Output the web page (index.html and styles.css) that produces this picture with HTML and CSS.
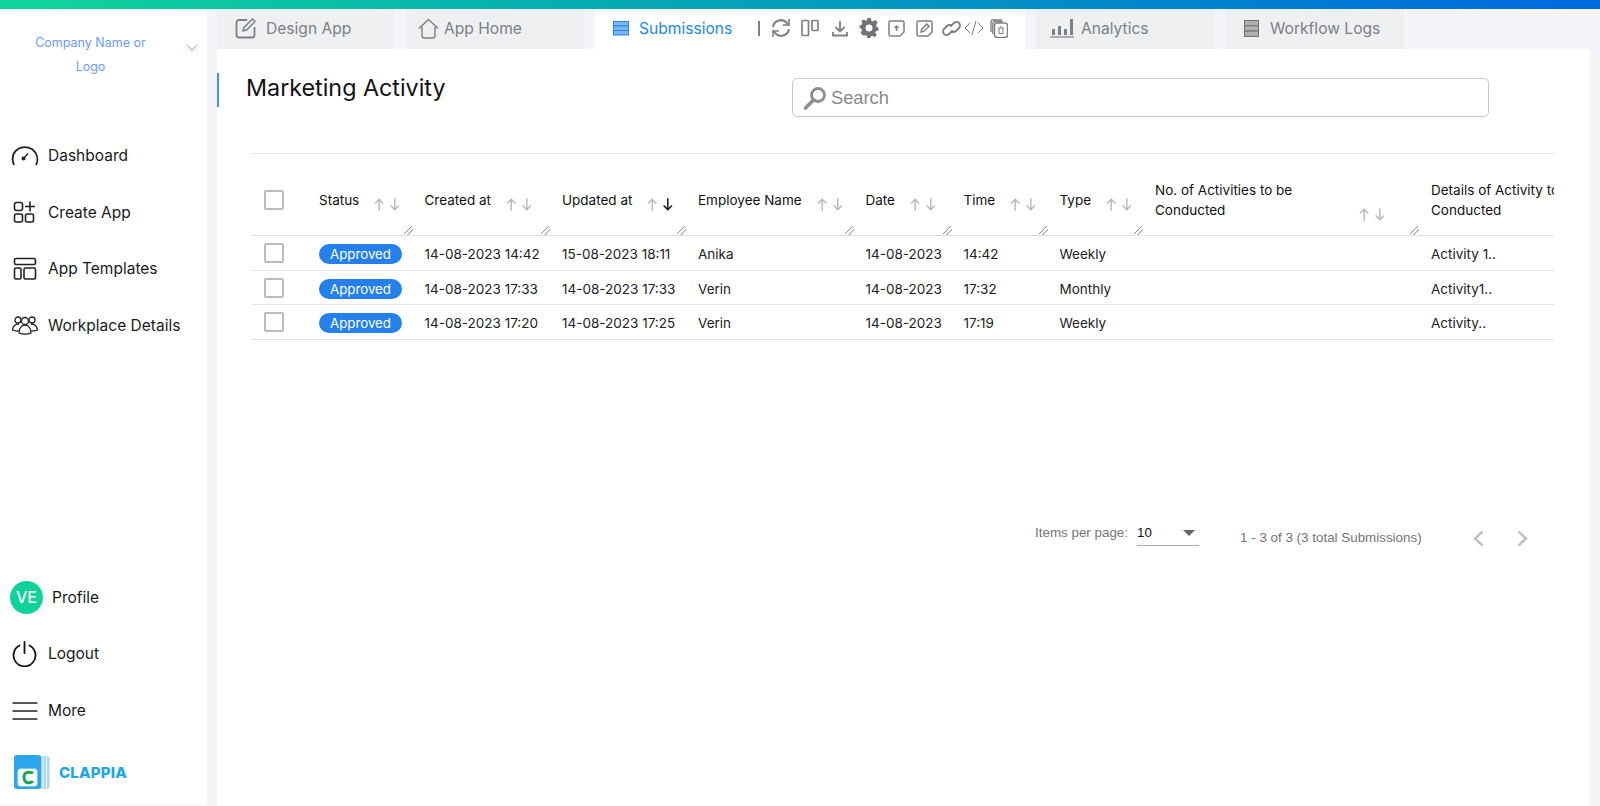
FILE: index.html
```html
<!DOCTYPE html>
<html lang="en">
<head>
<meta charset="utf-8">
<title>Marketing Activity</title>
<link rel="stylesheet" href="styles.css">
</head>
<body>
<div class="topbar"></div>
<div class="shell">
  <aside class="sidebar">
    <div class="company">
      <div class="company-name">Company Name or Logo</div>
      <svg class="chev" width="12" height="7" viewBox="0 0 12 7"><path d="M1 1l5 5 5-5" fill="none" stroke="#7fa6ee" stroke-width="1"/></svg>
    </div>
    <nav class="nav">
      <a class="nav-item"><svg class="nav-icon" width="30" height="24" viewBox="0 0 30 24"><path d="M4 22C1 15 3 9 8 6c5-3 10-2 14 0 5 4 7 10 4 16" fill="none" stroke="#222" stroke-width="1.8"/><path d="M13.500 15.500l4.500-5" stroke="#222" stroke-width="1.400"/><circle cx="13.500" cy="15.500" r="2" fill="#222"/></svg><span>Dashboard</span></a>
      <a class="nav-item"><svg class="nav-icon" width="30" height="24" viewBox="0 0 30 24"><g fill="none" stroke="#222" stroke-width="1.600"><rect x="4.500" y="2.500" width="8" height="8" rx="2"/><rect x="4.500" y="14" width="8" height="8" rx="2"/><rect x="15.500" y="14" width="8" height="8" rx="2"/><path d="M20 1.500v10M15 6.500h10"/></g></svg><span>Create App</span></a>
      <a class="nav-item"><svg class="nav-icon" width="30" height="24" viewBox="0 0 30 24"><g fill="none" stroke="#222" stroke-width="1.600"><rect x="4.500" y="1.500" width="21" height="6" rx="1.500"/><rect x="4.500" y="11" width="6.500" height="11" rx="1.500"/><rect x="14" y="11" width="11.500" height="11" rx="1.500"/></g></svg><span>App Templates</span></a>
      <a class="nav-item"><svg class="nav-icon" width="30" height="24" viewBox="0 0 30 24"><g fill="none" stroke="#222" stroke-width="1.300"><circle cx="15" cy="8" r="3.500"/><circle cx="8" cy="7" r="3"/><circle cx="22" cy="7" r="3"/><path d="M9 20c0-4 2-8 6-8s6 4 6 8c-3 1.500-9 1.500-12 0z"/><path d="M9 11c-3 0-6 2-6.500 6 1.500 1 4 1 6 1M21 11c3 0 6 2 6.500 6-1.500 1-4 1-6 1"/></g></svg><span>Workplace Details</span></a>
    </nav>
    <div class="side-bottom">
      <a class="nav-item profile"><span class="avatar">VE</span><span>Profile</span></a>
      <a class="nav-item"><svg class="nav-icon" width="30" height="26" viewBox="0 0 30 26"><path d="M19.500 4.500a11 11 0 1 1-10 0" fill="none" stroke="#111" stroke-width="1.800" stroke-linecap="round"/><path d="M14.500 1v11" stroke="#111" stroke-width="1.800" stroke-linecap="round"/></svg><span>Logout</span></a>
      <a class="nav-item"><svg class="nav-icon" width="30" height="20" viewBox="0 0 30 20"><path d="M2.500 2h25M2.500 10h25M2.500 18h25" stroke="#222" stroke-width="1.700"/></svg><span>More</span></a>
      <div class="brand">
        <svg width="36" height="35" viewBox="0 0 36 35"><rect x="24" y="1" width="11.500" height="33" rx="3" fill="#a9d6f6"/><path d="M29 1v33M32.500 1v33" stroke="#fff" stroke-width=".9"/><rect x="0" y="0" width="27" height="34" rx="3" fill="#2ba6ec"/><rect x="4" y="14" width="19" height="17" rx="2" fill="#fff" stroke="#cfeadb" stroke-width="1"/><path d="M19 18.500c-1-1.500-6-2-8 0-2 3-1 8 2 9 2 .5 5 0 6-1.500" fill="none" stroke="#16a951" stroke-width="3"/></svg>
        <span class="brand-name">CLAPPIA</span>
      </div>
    </div>
  </aside>

  <main class="workspace">
    <div class="tabs">
      <div class="tab tab-design"><svg width="22" height="22" viewBox="0 0 22 22"><path d="M12 3H4a2.500 2.500 0 0 0-2.500 2.500v12.500A2.500 2.500 0 0 0 4 20.500h13a2.500 2.500 0 0 0 2.500-2.500V10" fill="none" stroke="#7c7f83" stroke-width="1.800"/><path d="M8 14l1-3.500 8.500-8.500 2.500 2.500-8.500 8.500z" fill="none" stroke="#7c7f83" stroke-width="1.500"/></svg><span>Design App</span></div>
      <div class="tab tab-home"><svg width="21" height="21" viewBox="0 0 21 21"><path d="M1 10.500L10.500 1.500 20 10.500M4 9v8.500a2.500 2.500 0 0 0 2.500 2.500h8a2.500 2.500 0 0 0 2.500-2.500V9" fill="none" stroke="#7c7f83" stroke-width="1.400"/></svg><span>App Home</span></div>
      <div class="tab tab-active">
        <svg class="sub-icon" width="16" height="15" viewBox="0 0 16 15"><g fill="#7db6f2" stroke="#1e88e5" stroke-width="1"><rect x=".5" y=".5" width="15" height="4.500"/><rect x=".5" y="5" width="15" height="4.500"/><rect x=".5" y="9.500" width="15" height="4.500"/></g></svg>
        <span class="sub-label">Submissions</span>
        <span class="divider"></span>
        <div class="tools">
          <svg width="20" height="20" viewBox="0 0 20 20"><g fill="none" stroke="#7c7f83" stroke-width="2"><path d="M2 9a8 8 0 0 1 14-4l2 2"/><path d="M18 1v6h-6" stroke-width="1.600"/><path d="M18 11a8 8 0 0 1-14 4l-2-2"/><path d="M2 19v-6h6" stroke-width="1.600"/></g></svg>
          <svg width="18" height="18" viewBox="0 0 18 18"><g fill="none" stroke="#7c7f83" stroke-width="1.700"><rect x="1" y="1.500" width="6.500" height="15" rx="1"/><rect x="11" y="1.500" width="6" height="10" rx="1"/></g></svg>
          <svg width="16" height="17" viewBox="0 0 16 17"><g fill="none" stroke="#7c7f83" stroke-width="1.800"><path d="M8 1v10M3.500 7L8 11.500 12.500 7"/><path d="M1 12v3.500h14V12"/></g></svg>
          <svg width="20" height="20" viewBox="0 0 20 20"><path d="M8 0h4l.5 3 2 .8L17 2l3 3-1.800 2.500.8 2.500 2 .5v3l-3 .5-.8 2 1.800 2.500-2.500 2.500-2.500-1.800-2 .8-.5 2H8l-.5-2.500-2-.8L3 19l-3-3 1.800-2.500-.8-2L-1 11V8l2.200-.5.8-2L1 3l3-1.500 2 1.500 1.500-.5z" transform="translate(1.500 0) scale(.86 .92)" fill="#6f7377"/><circle cx="10" cy="10" r="3.500" fill="#fff"/></svg>
          <svg width="17" height="17" viewBox="0 0 17 17"><g fill="none" stroke="#7c7f83" stroke-width="1.500"><path d="M12 16H2.500A1.500 1.500 0 0 1 1 14.500v-12A1.500 1.500 0 0 1 2.500 1h12A1.500 1.500 0 0 1 16 2.500V12l-4 4"/><path d="M8.500 11V6M6.500 8l2-2 2 2"/></g></svg>
          <svg width="17" height="17" viewBox="0 0 17 17"><g fill="none" stroke="#7c7f83" stroke-width="1.500"><path d="M12 16H2.500A1.500 1.500 0 0 1 1 14.500v-12A1.500 1.500 0 0 1 2.500 1h12A1.500 1.500 0 0 1 16 2.500V12l-4 4"/><path d="M5 12l.8-3 5-5 2.200 2.200-5 5z"/></g></svg>
          <svg width="19" height="17" viewBox="0 0 19 17"><g fill="none" stroke="#7c7f83" stroke-width="1.800"><path d="M8 6.500L12 3a3.500 3.500 0 0 1 5 5l-3 3a3.500 3.500 0 0 1-5 0"/><path d="M11 10.500L7 14a3.500 3.500 0 0 1-5-5l3-3a3.500 3.500 0 0 1 5 0"/></g></svg>
          <svg width="20" height="16" viewBox="0 0 20 16"><g fill="none" stroke="#7c7f83" stroke-width="1"><path d="M6 3L1 8l5 5M14 3l5 5-5 5M12 1L8 15"/></g></svg>
          <svg width="18" height="19" viewBox="0 0 18 19"><g fill="none" stroke="#7c7f83" stroke-width="1.300"><path d="M1 13V3a2 2 0 0 1 2-2h9"/><path d="M2.800 15V4.500a2 2 0 0 1 2-2h8"/></g><rect x="4.500" y="4" width="13" height="14.500" rx="2.500" fill="#fff" stroke="#7c7f83" stroke-width="1.400"/><path d="M8 9h6M9 9v5.500h4V9M10 8h2" fill="none" stroke="#7c7f83" stroke-width="1"/></svg>
        </div>
      </div>
      <div class="tab tab-analytics"><svg width="24" height="20" viewBox="0 0 24 20"><path d="M2 11h3v6H2zM8 8h3v9H8zM14 11h3v6h-3zM20 1h3v16h-3z" fill="#7c7f83"/><path d="M0 19h24" stroke="#7c7f83" stroke-width="1.200"/></svg><span>Analytics</span></div>
      <div class="tab tab-logs"><svg width="15" height="17" viewBox="0 0 15 17"><g fill="#b0b0b0" stroke="#6f6f6f" stroke-width="1"><rect x=".5" y=".5" width="14" height="5.300"/><rect x=".5" y="5.800" width="14" height="5.300"/><rect x=".5" y="11.100" width="14" height="5.300"/></g></svg><span>Workflow Logs</span></div>
    </div>

    <section class="panel">
      <header class="panel-head">
        <h1 class="title">Marketing Activity</h1>
        <label class="search">
          <svg width="24" height="24" viewBox="0 0 24 24"><circle cx="15" cy="9" r="6.500" fill="none" stroke="#8d8d8d" stroke-width="2.800"/><path d="M10.500 14L2.500 22" stroke="#8d8d8d" stroke-width="3.600" stroke-linecap="round"/></svg>
          <span class="search-text">Search</span>
        </label>
      </header>

      <div class="table-wrap">
        <table class="grid">
          <colgroup>
            <col class="c-check"><col class="c-status"><col class="c-created"><col class="c-updated"><col class="c-name"><col class="c-date"><col class="c-time"><col class="c-type"><col class="c-count"><col class="c-details">
          </colgroup>
          <thead>
            <tr>
              <th class="check-cell"><span class="box"></span></th>
              <th><div class="th-in"><span>Status</span><svg class="sort" viewBox="0 0 25 14"><path class="up" d="M5 13V2M1 6l4-4 4 4"/><path class="up" d="M20 1v11M16 8l4 4 4-4"/></svg></div><i class="grip"></i></th>
              <th><div class="th-in"><span>Created at</span><svg class="sort" viewBox="0 0 25 14"><path class="up" d="M5 13V2M1 6l4-4 4 4"/><path class="up" d="M20 1v11M16 8l4 4 4-4"/></svg></div><i class="grip"></i></th>
              <th><div class="th-in"><span>Updated at</span><svg class="sort" viewBox="0 0 25 14"><path class="up" d="M5 13V2M1 6l4-4 4 4"/><path class="down" d="M20 1v11M16 8l4 4 4-4"/></svg></div><i class="grip"></i></th>
              <th><div class="th-in"><span>Employee Name</span><svg class="sort" viewBox="0 0 25 14"><path class="up" d="M5 13V2M1 6l4-4 4 4"/><path class="up" d="M20 1v11M16 8l4 4 4-4"/></svg></div><i class="grip"></i></th>
              <th><div class="th-in"><span>Date</span><svg class="sort" viewBox="0 0 25 14"><path class="up" d="M5 13V2M1 6l4-4 4 4"/><path class="up" d="M20 1v11M16 8l4 4 4-4"/></svg></div><i class="grip"></i></th>
              <th><div class="th-in"><span>Time</span><svg class="sort" viewBox="0 0 25 14"><path class="up" d="M5 13V2M1 6l4-4 4 4"/><path class="up" d="M20 1v11M16 8l4 4 4-4"/></svg></div><i class="grip"></i></th>
              <th><div class="th-in"><span>Type</span><svg class="sort" viewBox="0 0 25 14"><path class="up" d="M5 13V2M1 6l4-4 4 4"/><path class="up" d="M20 1v11M16 8l4 4 4-4"/></svg></div><i class="grip"></i></th>
              <th><div class="th-in"><span class="wide-label">No. of Activities to be Conducted</span><svg class="sort" viewBox="0 0 25 14"><path class="up" d="M5 13V2M1 6l4-4 4 4"/><path class="up" d="M20 1v11M16 8l4 4 4-4"/></svg></div><i class="grip"></i></th>
              <th><div class="th-in"><span class="wide-label">Details of Activity to be Conducted</span></div></th>
            </tr>
          </thead>
          <tbody>
            <tr><td class="check-cell"><span class="box"></span></td><td><span class="badge">Approved</span></td><td>14-08-2023 14:42</td><td>15-08-2023 18:11</td><td>Anika</td><td>14-08-2023</td><td>14:42</td><td>Weekly</td><td></td><td>Activity 1..</td></tr>
            <tr><td class="check-cell"><span class="box"></span></td><td><span class="badge">Approved</span></td><td>14-08-2023 17:33</td><td>14-08-2023 17:33</td><td>Verin</td><td>14-08-2023</td><td>17:32</td><td>Monthly</td><td></td><td>Activity1..</td></tr>
            <tr><td class="check-cell"><span class="box"></span></td><td><span class="badge">Approved</span></td><td>14-08-2023 17:20</td><td>14-08-2023 17:25</td><td>Verin</td><td>14-08-2023</td><td>17:19</td><td>Weekly</td><td></td><td>Activity..</td></tr>
          </tbody>
        </table>
      </div>

      <footer class="pager">
        <span class="per-label">Items per page:</span>
        <span class="per-select"><span>10</span><i class="caret"></i></span>
        <span class="range">1 - 3 of 3 (3 total Submissions)</span>
        <svg class="pg-prev" width="13" height="17" viewBox="0 0 13 17"><path d="M10.500 1.500L3 8.500l7.500 7" fill="none" stroke="#c0c0c0" stroke-width="2.400"/></svg>
        <svg class="pg-next" width="13" height="17" viewBox="0 0 13 17"><path d="M2.500 1.500L10 8.500l-7.500 7" fill="none" stroke="#c0c0c0" stroke-width="2.400"/></svg>
      </footer>
    </section>
  </main>
</div>
</body>
</html>
```

FILE: styles.css
```css
* { box-sizing: border-box; }
html, body { margin: 0; height: 100%; }
body {
  height: 806px;
  overflow: hidden;
  display: flex;
  flex-direction: column;
  background: #f3f5f9;
  font-family: Inter, "Liberation Sans", sans-serif;
  color: #111;
}
.topbar {
  height: 9px;
  flex: none;
  background: linear-gradient(90deg, #10d69a 0%, #05a8b4 40%, #0068e0 100%);
}
.shell { flex: 1; display: flex; min-height: 0; }

/* sidebar */
.sidebar {
  width: 207px;
  flex: none;
  background: #fff;
  display: flex;
  flex-direction: column;
  margin-bottom: 1px;
}
.company {
  display: flex;
  align-items: center;
  height: 70px;
  margin-top: 11px;
  padding-left: 32px;
}
.company-name {
  width: 117px;
  text-align: center;
  font-size: 12.500px;
  line-height: 24px;
  color: #6d9cf4;
}
.chev { margin-left: 37px; margin-top: -15px; }
.nav { display: flex; flex-direction: column; margin-top: 37px; }
.nav-item {
  height: 56.700px;
  display: flex;
  align-items: center;
  gap: 8px;
  padding-left: 10px;
  font-size: 15.500px;
  color: #1a1a1a;
}
.nav-icon { flex: none; }
.side-bottom { margin-top: auto; display: flex; flex-direction: column; padding-bottom: 15px; }
.profile { gap: 9px; }
.avatar {
  width: 33px;
  height: 33px;
  border-radius: 50%;
  background: #0ed39a;
  color: #fff;
  font-size: 16px;
  font-weight: 500;
  display: flex;
  align-items: center;
  justify-content: center;
}
.brand { display: flex; align-items: center; gap: 9px; padding-left: 14px; margin-top: 16px; }
.brand-name { font-weight: 800; font-size: 15px; color: #1ea5ec; letter-spacing: .2px; }

/* workspace */
.workspace { flex: none; width: 1373px; margin-left: 10px; display: flex; flex-direction: column; }
.tabs { display: flex; height: 40px; flex: none; gap: 12px; font-size: 15.600px; color: #7c7f83; }
.tab { background: #eef0f2; display: flex; align-items: center; padding-bottom: 2px; }
.tab-design { width: 177px; padding-left: 18px; gap: 9px; }
.tab-home { width: 178px; padding-left: 12px; gap: 5px; }
.tab-active { width: 430px; background: #fff; color: #1e88e5; padding-left: 18px; margin-left: -1px; }
.tab-analytics { width: 178px; padding-left: 14px; gap: 7px; margin-left: -1px; }
.tab-logs { width: 178px; padding-left: 18px; gap: 11px; }
.sub-icon { flex: none; }
.sub-label { margin-left: 10px; }
.divider { width: 2px; height: 15px; background: #7c7f83; margin-left: 26px; }
.tools { display: flex; align-items: center; margin-left: 11px; }
.tools svg { flex: none; }
.tools svg:nth-child(2) { margin-left: 10px; }
.tools svg:nth-child(3) { margin-left: 13px; }
.tools svg:nth-child(4) { margin-left: 11px; }
.tools svg:nth-child(5) { margin-left: 9px; }
.tools svg:nth-child(6) { margin-left: 11px; }
.tools svg:nth-child(7) { margin-left: 9px; }
.tools svg:nth-child(8) { margin-left: 3px; }
.tools svg:nth-child(9) { margin-left: 6px; }

.panel { flex: 1; background: #fff; display: flex; flex-direction: column; min-height: 0; }
.panel-head { height: 104px; flex: none; display: flex; align-items: flex-start; padding-top: 24px; }
.title {
  margin: 0;
  height: 34px;
  border-left: 2px solid #4a8cf0;
  padding-left: 27px;
  font-size: 23.300px;
  font-weight: 400;
  line-height: 30px;
  color: #111;
}
.search {
  margin-left: auto;
  margin-right: 101px;
  margin-top: 5px;
  width: 697px;
  height: 39px;
  border: 1px solid #c9c9c9;
  border-radius: 5px;
  display: flex;
  align-items: center;
  padding-left: 10px;
  gap: 4px;
}
.search-text { font-family: "Liberation Sans", sans-serif; font-size: 18.300px; color: #8a8a8a; }

/* table */
.table-wrap { margin-left: 35px; width: 1302px; overflow: hidden; border-top: 1px solid #e3e5e8; flex: none; }
.grid { border-collapse: separate; border-spacing: 0; table-layout: fixed; width: 1370px; font-size: 13.500px; }
.c-check { width: 67px; }
.c-status { width: 105.500px; }
.c-created { width: 137.500px; }
.c-updated { width: 136px; }
.c-name { width: 167.500px; }
.c-date { width: 98px; }
.c-time { width: 96px; }
.c-type { width: 95.500px; }
.c-count { width: 276px; }
.c-details { width: 191px; }
th {
  position: relative;
  height: 82px;
  padding: 10px 0 0;
  border-bottom: 1px solid #dfe1e4;
  text-align: left;
  font-weight: 400;
  line-height: 20px;
  vertical-align: middle;
}
.th-in { display: inline-flex; align-items: flex-end; gap: 15px; color: #111; }
.wide-label { display: block; width: 189px; }
.sort { flex: none; width: 26px; height: 15px; margin-bottom: -2px; }
.up, .down { fill: none; stroke-width: 1.400; }
.up { stroke: #b8b8b8; }
.down { stroke: #111; }
.grip {
  position: absolute;
  right: 12px;
  bottom: 0;
  width: 9px;
  height: 9px;
  background: linear-gradient(135deg, transparent 42%, #8a8a8a 42%, #8a8a8a 49%, transparent 49%, transparent 66%, #bbb 66%, #bbb 73%, transparent 73%);
}
td {
  height: 34.500px;
  padding: 3px 0 0;
  border-bottom: 1px solid #dfe1e4;
  color: #222;
  vertical-align: middle;
  white-space: nowrap;
}
.check-cell { padding-left: 11.500px; }
td.check-cell { padding-top: 1px; }
.box { display: block; width: 20px; height: 20px; border: 2px solid #b9bdc2; border-radius: 2px; }
.badge {
  display: block;
  width: 83px;
  height: 20px;
  border-radius: 10px;
  background: #2580ec;
  color: #fff;
  text-align: center;
  line-height: 20px;
  font-size: 13.300px;
}

/* pager */
.pager {
  display: flex;
  align-items: flex-start;
  margin-top: 184px;
  padding-left: 818px;
  font-family: "Liberation Sans", sans-serif;
  font-size: 13.400px;
  color: #757575;
}
.per-label { padding-top: 1px; }
.per-select {
  width: 62px;
  height: 22px;
  margin-left: 9px;
  border-bottom: 1px solid #a9a9a9;
  display: flex;
  justify-content: space-between;
  color: #111;
  font-size: 13.300px;
  padding-top: 1px;
}
.caret { width: 0; height: 0; margin: 5px 4px 0 0; border: 6px solid transparent; border-top-color: #666; border-bottom: 0; }
.range { margin-left: 41px; padding-top: 6px; }
.pg-prev { margin-left: 50px; margin-top: 6px; }
.pg-next { margin-left: 31px; margin-top: 6px; }
```
